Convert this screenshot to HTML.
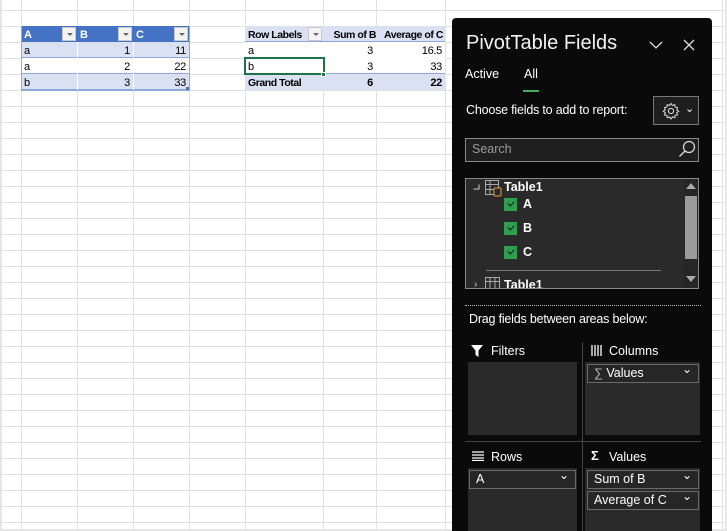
<!DOCTYPE html>
<html><head><meta charset="utf-8"><style>
*{margin:0;padding:0;box-sizing:border-box}
body{width:727px;height:531px;overflow:hidden;background:#fff;position:relative;font-family:"Liberation Sans",Arial,sans-serif;font-size:11px;color:#000}
.a{position:absolute}
.grid{position:absolute;left:0;top:0;width:727px;height:531px;background-image:repeating-linear-gradient(to bottom,transparent 0,transparent 9px,#e1e1e1 9px,#e1e1e1 10px,transparent 10px,transparent 16px);background-position:0 1px}
.vl{position:absolute;top:0;width:1px;height:531px;background:#e1e1e1}
.c{position:absolute;height:16px;line-height:18px;padding:0 3px;white-space:nowrap;letter-spacing:-0.3px}
.r{text-align:right}
.dd{position:absolute;width:14px;height:14px;background:#f3f3f3;border:1px solid #c8c8c8}
.dd:after{content:"";position:absolute;left:4px;top:5px;border-left:3px solid transparent;border-right:3px solid transparent;border-top:3px solid #666}
.p{position:absolute;left:452px;top:18px;width:260px;height:513px;background:#0a0a0a;border-radius:4px 4px 0 0;color:#fff;font-size:12.5px}
.p .a{white-space:nowrap}
.box{position:absolute;background:#2a2a2a}
.pill{position:absolute;height:19px;border:1px solid #6a6a6a;background:#262626;line-height:17px;padding-left:6px;font-size:12.5px}
.pill:after{content:"⌄";position:absolute;right:6px;top:-4px;font-size:12px}
.cb{position:absolute;width:13px;height:13px;background:#2e9e4f}
.cb:after{content:"";position:absolute;left:4px;top:3px;width:5px;height:3px;border-left:1.2px solid #111;border-bottom:1.2px solid #111;transform:rotate(-45deg)}
.hd{font-size:10.5px;letter-spacing:-0.45px}
</style></head><body>
<div class="grid"></div>
<div class="vl" style="left:21px"></div><div class="vl" style="left:77px"></div><div class="vl" style="left:133px"></div><div class="vl" style="left:189px"></div><div class="vl" style="left:245px"></div><div class="vl" style="left:323px"></div><div class="vl" style="left:376px"></div><div class="vl" style="left:445px"></div><div class="vl" style="left:722px"></div>
<!-- source table -->
<div class="a" style="left:21px;top:26px;width:168px;height:16px;background:#4472c4"></div>
<div class="a" style="left:21px;top:42px;width:168px;height:16px;background:#d9e1f2;border-bottom:1px solid #8ea9db"></div>
<div class="a" style="left:21px;top:58px;width:168px;height:16px;background:#fff;border-bottom:1px solid #8ea9db"></div>
<div class="a" style="left:21px;top:74px;width:168px;height:16px;background:#d9e1f2;border-bottom:1px solid #8ea9db"></div>
<div class="a" style="left:21px;top:26px;width:169px;height:65px;border:1px solid #8ea9db;border-top:none"></div>
<div class="a" style="left:77px;top:42px;width:1px;height:48px;background:#fff"></div>
<div class="a" style="left:133px;top:42px;width:1px;height:48px;background:#fff"></div>
<div class="c" style="left:21px;top:26px;color:#fff;font-weight:bold">A</div>
<div class="c" style="left:77px;top:26px;color:#fff;font-weight:bold">B</div>
<div class="c" style="left:133px;top:26px;color:#fff;font-weight:bold">C</div>
<div class="dd" style="left:62px;top:27px"></div><div class="dd" style="left:118px;top:27px"></div><div class="dd" style="left:174px;top:27px"></div>
<div class="c" style="left:21px;top:42px">a</div><div class="c r" style="left:77px;top:42px;width:56px">1</div><div class="c r" style="left:133px;top:42px;width:56px">11</div>
<div class="c" style="left:21px;top:58px">a</div><div class="c r" style="left:77px;top:58px;width:56px">2</div><div class="c r" style="left:133px;top:58px;width:56px">22</div>
<div class="c" style="left:21px;top:74px">b</div><div class="c r" style="left:77px;top:74px;width:56px">3</div><div class="c r" style="left:133px;top:74px;width:56px">33</div>
<div class="a" style="left:186px;top:87px;width:3px;height:3px;background:#4472c4"></div>
<!-- pivot -->
<div class="a" style="left:245px;top:26px;width:200px;height:16px;background:#d9e1f2;border-bottom:1px solid #8ea9db"></div>
<div class="a" style="left:245px;top:42px;width:200px;height:32px;background:#fff;border-bottom:1px solid #8ea9db"></div>
<div class="a" style="left:245px;top:74px;width:200px;height:16px;background:#d9e1f2"></div>
<div class="c hd" style="left:245px;top:26px;font-weight:bold">Row Labels</div>
<div class="dd" style="left:308px;top:27px"></div>
<div class="c r hd" style="left:323px;top:26px;width:54px;font-weight:bold;padding:0 1px">Sum of B</div>
<div class="c r hd" style="left:376px;top:26px;width:69px;font-weight:bold;padding:0 2px">Average of C</div>
<div class="c" style="left:245px;top:42px">a</div><div class="c r" style="left:323px;top:42px;width:53px">3</div><div class="c r" style="left:376px;top:42px;width:69px">16.5</div>
<div class="c" style="left:245px;top:58px">b</div><div class="c r" style="left:323px;top:58px;width:53px">3</div><div class="c r" style="left:376px;top:58px;width:69px">33</div>
<div class="c hd" style="left:245px;top:74px;font-weight:bold">Grand Total</div><div class="c r" style="left:323px;top:74px;width:53px;font-weight:bold">6</div><div class="c r" style="left:376px;top:74px;width:69px;font-weight:bold">22</div>
<div class="a" style="left:244px;top:57px;width:81px;height:18px;border:2px solid #217346"></div>
<div class="a" style="left:321px;top:72px;width:5px;height:5px;background:#217346;border:1px solid #fff"></div>
<!-- borders -->
<div class="a" style="left:0;top:0;width:2px;height:531px;background:#e6e6e6"></div>
<div class="a" style="left:0;top:529px;width:727px;height:2px;background:#e6e6e6"></div>
<div class="a" style="left:725px;top:0;width:2px;height:531px;background:#e6e6e6"></div>
<!-- panel -->
<div class="p">
<div class="a" style="left:14px;top:14px;font-size:20px;color:#f2f2f2">PivotTable Fields</div>
<svg class="a" style="left:197px;top:22px" width="14" height="10"><path d="M1 2 L7 8 L13 2" stroke="#ddd" stroke-width="1.3" fill="none"/></svg>
<svg class="a" style="left:231px;top:21px" width="12" height="12"><path d="M1 1 L11 11 M11 1 L1 11" stroke="#ddd" stroke-width="1.3"/></svg>
<div class="a" style="left:13px;top:49px">Active</div>
<div class="a" style="left:72px;top:49px">All</div>
<div class="a" style="left:71px;top:72px;width:16px;height:2px;background:#3fae5f"></div>
<div class="a" style="left:14px;top:85px;font-size:12.5px;letter-spacing:-0.2px">Choose fields to add to report:</div>
<div class="a" style="left:201px;top:78px;width:46px;height:29px;border:1px solid #777;background:#1e1e1e"></div>
<svg class="a" style="left:210px;top:84px" width="18" height="18" viewBox="0 0 18 18"><path d="M9 1.5 l1.5 2 2.3-.8.3 2.4 2.4.3-.8 2.3 2 1.5-2 1.5.8 2.3-2.4.3-.3 2.4-2.3-.8-1.5 2-1.5-2-2.3.8-.3-2.4-2.4-.3.8-2.3-2-1.5 2-1.5-.8-2.3 2.4-.3.3-2.4 2.3.8z" fill="none" stroke="#ddd" stroke-width="1"/><circle cx="9" cy="9" r="2.6" fill="none" stroke="#ddd"/></svg>
<div class="a" style="left:233px;top:84px;font-size:11px">⌄</div>
<div class="a" style="left:13px;top:120px;width:234px;height:24px;border:1px solid #888;background:#1f1f1f"></div>
<div class="a" style="left:20px;top:124px;color:#9a9a9a">Search</div>
<svg class="a" style="left:226px;top:122px" width="18" height="18"><circle cx="11" cy="7" r="5.5" fill="none" stroke="#ddd" stroke-width="1.2"/><path d="M7 11 L1.5 16.5" stroke="#ddd" stroke-width="1.3"/></svg>
<div class="box" style="left:13px;top:160px;width:234px;height:111px;border:1px solid #888;overflow:hidden">
 <div class="a" style="left:8px;top:5px;width:5px;height:6px;border-left:1px solid #ccc;border-bottom:1px solid #ccc;transform:rotate(-90deg)"></div>
 <svg class="a" style="left:19px;top:1px" width="18" height="18"><rect x=".5" y=".5" width="13" height="14" fill="none" stroke="#aaa"/><path d="M.5 4.5H13.5M5 .5V14.5M.5 9.5H13.5" stroke="#aaa"/><rect x="9" y="8" width="7" height="8" rx="1" fill="#2a2a2a" stroke="#e59a3a"/></svg>
 <div class="a" style="left:38px;top:1px;font-weight:bold;font-size:12.5px">Table1</div>
 <div class="cb" style="left:38px;top:19px"></div><div class="a" style="left:57px;top:18px;font-weight:bold">A</div>
 <div class="cb" style="left:38px;top:43px"></div><div class="a" style="left:57px;top:42px;font-weight:bold">B</div>
 <div class="cb" style="left:38px;top:67px"></div><div class="a" style="left:57px;top:66px;font-weight:bold">C</div>
 <div class="a" style="left:20px;top:91px;width:175px;height:1px;background:#777"></div>
 <div class="a" style="left:8px;top:100px;font-size:10px;color:#ccc">›</div>
 <svg class="a" style="left:19px;top:98px" width="16" height="14"><rect x=".5" y=".5" width="14" height="13" fill="none" stroke="#aaa"/><path d="M.5 4.5H14.5M5 .5V14M10 .5V14" stroke="#aaa"/></svg>
 <div class="a" style="left:38px;top:99px;font-weight:bold;font-size:12.5px">Table1</div>
 <div class="a" style="left:218px;top:0;width:14px;height:109px;background:#262626"></div>
 <div class="a" style="left:220px;top:4px;border-left:5px solid transparent;border-right:5px solid transparent;border-bottom:6px solid #aaa"></div>
 <div class="a" style="left:219px;top:17px;width:12px;height:63px;background:#9a9a9a"></div>
 <div class="a" style="left:220px;top:97px;border-left:5px solid transparent;border-right:5px solid transparent;border-top:6px solid #aaa"></div>
</div>
<div class="a" style="left:13px;top:287px;width:236px;border-top:1px dotted #bbb"></div>
<div class="a" style="left:17px;top:294px;letter-spacing:-0.2px">Drag fields between areas below:</div>
<div class="a" style="left:130px;top:324px;width:1px;height:189px;background:#444"></div>
<div class="a" style="left:13px;top:423px;width:236px;height:1px;background:#444"></div>
<svg class="a" style="left:19px;top:327px" width="12" height="12"><path d="M0 0H12L7.5 5.5V12L4.5 10V5.5Z" fill="#fff"/></svg>
<div class="a" style="left:39px;top:326px">Filters</div>
<svg class="a" style="left:139px;top:327px" width="12" height="11"><path d="M1 0V11M4 0V11M7 0V11M10 0V11" stroke="#fff" stroke-width="1.3"/></svg>
<div class="a" style="left:157px;top:326px">Columns</div>
<div class="box" style="left:16px;top:344px;width:109px;height:73px"></div>
<div class="box" style="left:133px;top:344px;width:115px;height:73px"></div>
<div class="pill" style="left:135px;top:346px;width:112px"><span style="color:#bbb">∑</span> Values</div>
<svg class="a" style="left:20px;top:433px" width="12" height="10"><path d="M0 1H12M0 4H12M0 7H12M0 9.5H12" stroke="#fff" stroke-width="1.2"/></svg>
<div class="a" style="left:39px;top:432px">Rows</div>
<div class="a" style="left:139px;top:430px;font-weight:bold;font-size:13px">Σ</div>
<div class="a" style="left:157px;top:432px">Values</div>
<div class="box" style="left:16px;top:450px;width:109px;height:63px"></div>
<div class="box" style="left:133px;top:450px;width:115px;height:63px"></div>
<div class="pill" style="left:17px;top:452px;width:107px">A</div>
<div class="pill" style="left:135px;top:452px;width:112px">Sum of B</div>
<div class="pill" style="left:135px;top:473px;width:112px">Average of C</div>
</div>
</body></html>
